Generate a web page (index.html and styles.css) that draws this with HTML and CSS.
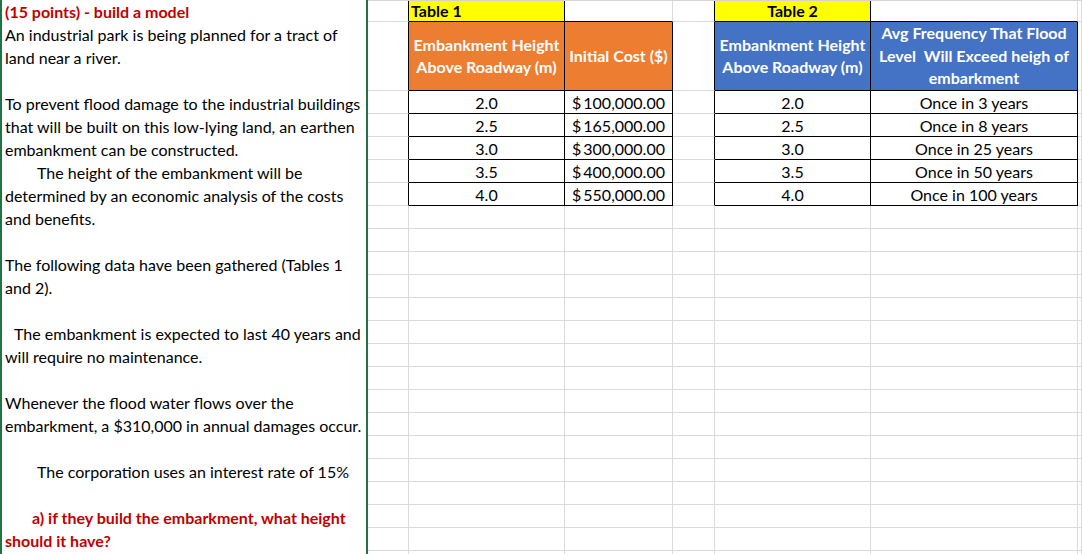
FILE: index.html
```html
<!DOCTYPE html>
<html>
<head>
<meta charset="utf-8">
<link rel="stylesheet" href="styles.css">
</head>
<body>
<div class="sheet">
  <div class="note">
    <div class="ln red">(15 points) - build a model</div>
    <div class="ln">An industrial park is being planned for a tract of</div>
    <div class="ln">land near a river.</div>
    <div class="ln"></div>
    <div class="ln">To prevent flood damage to the industrial buildings</div>
    <div class="ln">that will be built on this low-lying land, an earthen</div>
    <div class="ln">embankment can be constructed.</div>
    <div class="ln ind-l">The height of the embankment will be</div>
    <div class="ln">determined by an economic analysis of the costs</div>
    <div class="ln">and benefits.</div>
    <div class="ln"></div>
    <div class="ln">The following data have been gathered (Tables 1</div>
    <div class="ln">and 2).</div>
    <div class="ln"></div>
    <div class="ln ind-s">The embankment is expected to last 40 years and</div>
    <div class="ln">will require no maintenance.</div>
    <div class="ln"></div>
    <div class="ln">Whenever the flood water flows over the</div>
    <div class="ln">embarkment, a $310,000 in annual damages occur.</div>
    <div class="ln"></div>
    <div class="ln ind-l">The corporation uses an interest rate of 15%</div>
    <div class="ln"></div>
    <div class="ln red ind-m">a) if they build the embarkment, what height</div>
    <div class="ln red">should it have?</div>
  </div>
  <div class="grid">
    <!-- row 1 -->
    <div class="c edge"></div>
    <div class="c t yel title">Table 1</div>
    <div class="c under"></div>
    <div class="c edge"></div>
    <div class="c t yel title center">Table 2</div>
    <div class="c under"></div>
    <div class="c"></div>
    <!-- row 2 -->
    <div class="c edge"></div>
    <div class="c t hd org">Embankment Height<br>Above Roadway (m)</div>
    <div class="c t hd org">Initial Cost ($)</div>
    <div class="c edge"></div>
    <div class="c t hd blu">Embankment Height<br>Above Roadway (m)</div>
    <div class="c t hd blu">Avg Frequency That Flood<br>Level&nbsp; Will Exceed heigh of<br>embarkment</div>
    <div class="c"></div>
    <!-- data rows -->
    <div class="c edge"></div><div class="c t td">2.0</div><div class="c t td">$&#8201;100,000.00</div><div class="c edge"></div><div class="c t td">2.0</div><div class="c t td">Once in 3 years</div><div class="c"></div>
    <div class="c edge"></div><div class="c t td">2.5</div><div class="c t td">$&#8201;165,000.00</div><div class="c edge"></div><div class="c t td">2.5</div><div class="c t td">Once in 8 years</div><div class="c"></div>
    <div class="c edge"></div><div class="c t td">3.0</div><div class="c t td">$&#8201;300,000.00</div><div class="c edge"></div><div class="c t td">3.0</div><div class="c t td">Once in 25 years</div><div class="c"></div>
    <div class="c edge"></div><div class="c t td">3.5</div><div class="c t td">$&#8201;400,000.00</div><div class="c edge"></div><div class="c t td">3.5</div><div class="c t td">Once in 50 years</div><div class="c"></div>
    <div class="c edge"></div><div class="c t td">4.0</div><div class="c t td">$&#8201;550,000.00</div><div class="c edge"></div><div class="c t td">4.0</div><div class="c t td">Once in 100 years</div><div class="c"></div>
    <!-- empty rows -->
    <div class="c"></div><div class="c"></div><div class="c"></div><div class="c"></div><div class="c"></div><div class="c"></div><div class="c"></div>
    <div class="c"></div><div class="c"></div><div class="c"></div><div class="c"></div><div class="c"></div><div class="c"></div><div class="c"></div>
    <div class="c"></div><div class="c"></div><div class="c"></div><div class="c"></div><div class="c"></div><div class="c"></div><div class="c"></div>
    <div class="c"></div><div class="c"></div><div class="c"></div><div class="c"></div><div class="c"></div><div class="c"></div><div class="c"></div>
    <div class="c"></div><div class="c"></div><div class="c"></div><div class="c"></div><div class="c"></div><div class="c"></div><div class="c"></div>
    <div class="c"></div><div class="c"></div><div class="c"></div><div class="c"></div><div class="c"></div><div class="c"></div><div class="c"></div>
    <div class="c"></div><div class="c"></div><div class="c"></div><div class="c"></div><div class="c"></div><div class="c"></div><div class="c"></div>
    <div class="c"></div><div class="c"></div><div class="c"></div><div class="c"></div><div class="c"></div><div class="c"></div><div class="c"></div>
    <div class="c"></div><div class="c"></div><div class="c"></div><div class="c"></div><div class="c"></div><div class="c"></div><div class="c"></div>
    <div class="c"></div><div class="c"></div><div class="c"></div><div class="c"></div><div class="c"></div><div class="c"></div><div class="c"></div>
    <div class="c"></div><div class="c"></div><div class="c"></div><div class="c"></div><div class="c"></div><div class="c"></div><div class="c"></div>
    <div class="c"></div><div class="c"></div><div class="c"></div><div class="c"></div><div class="c"></div><div class="c"></div><div class="c"></div>
    <div class="c"></div><div class="c"></div><div class="c"></div><div class="c"></div><div class="c"></div><div class="c"></div><div class="c"></div>
    <div class="c"></div><div class="c"></div><div class="c"></div><div class="c"></div><div class="c"></div><div class="c"></div><div class="c"></div>
    <div class="c"></div><div class="c"></div><div class="c"></div><div class="c"></div><div class="c"></div><div class="c"></div><div class="c"></div>
    <div class="c"></div><div class="c"></div><div class="c"></div><div class="c"></div><div class="c"></div><div class="c"></div><div class="c"></div>
  </div>
</div>
</body>
</html>
```

FILE: styles.css
```css
html, body {
  margin: 0;
  padding: 0;
  background: #ffffff;
}

body {
  font-family: "Lato", "Liberation Sans", sans-serif;
  font-size: 16px;
  color: #000000;
}

.sheet {
  display: flex;
  width: 1082px;
  height: 554px;
  overflow: hidden;
}

.note {
  flex: none;
  width: 368px;
  box-sizing: border-box;
  border-left: 2px solid #217346;
  border-right: 2px solid #217346;
  padding: 0 0 0 3px;
  line-height: 23px;
  white-space: nowrap;
  overflow: hidden;
}

.ln {
  height: 23px;
}

.red {
  color: #c00000;
  font-weight: bold;
}

.ind-s { padding-left: 9px; }
.ind-m { padding-left: 27px; }
.ind-l { padding-left: 32px; }

.grid {
  flex: 1;
  display: grid;
  grid-template-columns: 41px 156px 108px 42px 156px 207px 1fr;
  grid-template-rows: 21px 69px repeat(21, 23px);
  align-content: start;
  border-top: 1px solid #d4d4d4;
}

.c {
  box-sizing: border-box;
  border-right: 1px solid #dadada;
  border-bottom: 1px solid #dadada;
  min-width: 0;
  overflow: hidden;
  white-space: nowrap;
}

.edge {
  border-right-color: #000000;
}

.under {
  border-bottom-color: #000000;
}

.t {
  border-right-color: #000000;
  border-bottom-color: #000000;
}

.yel {
  background: #ffff00;
}

.title {
  font-weight: bold;
  padding-left: 2px;
  line-height: 20px;
}

.center {
  text-align: center;
  padding-left: 0;
}

.hd {
  display: flex;
  align-items: center;
  justify-content: center;
  text-align: center;
  color: #ffffff;
  font-weight: bold;
  line-height: 22.5px;
}

.org {
  background: #ed7d31;
}

.blu {
  background: #4472c4;
}

.td {
  display: flex;
  align-items: center;
  justify-content: center;
}
```
